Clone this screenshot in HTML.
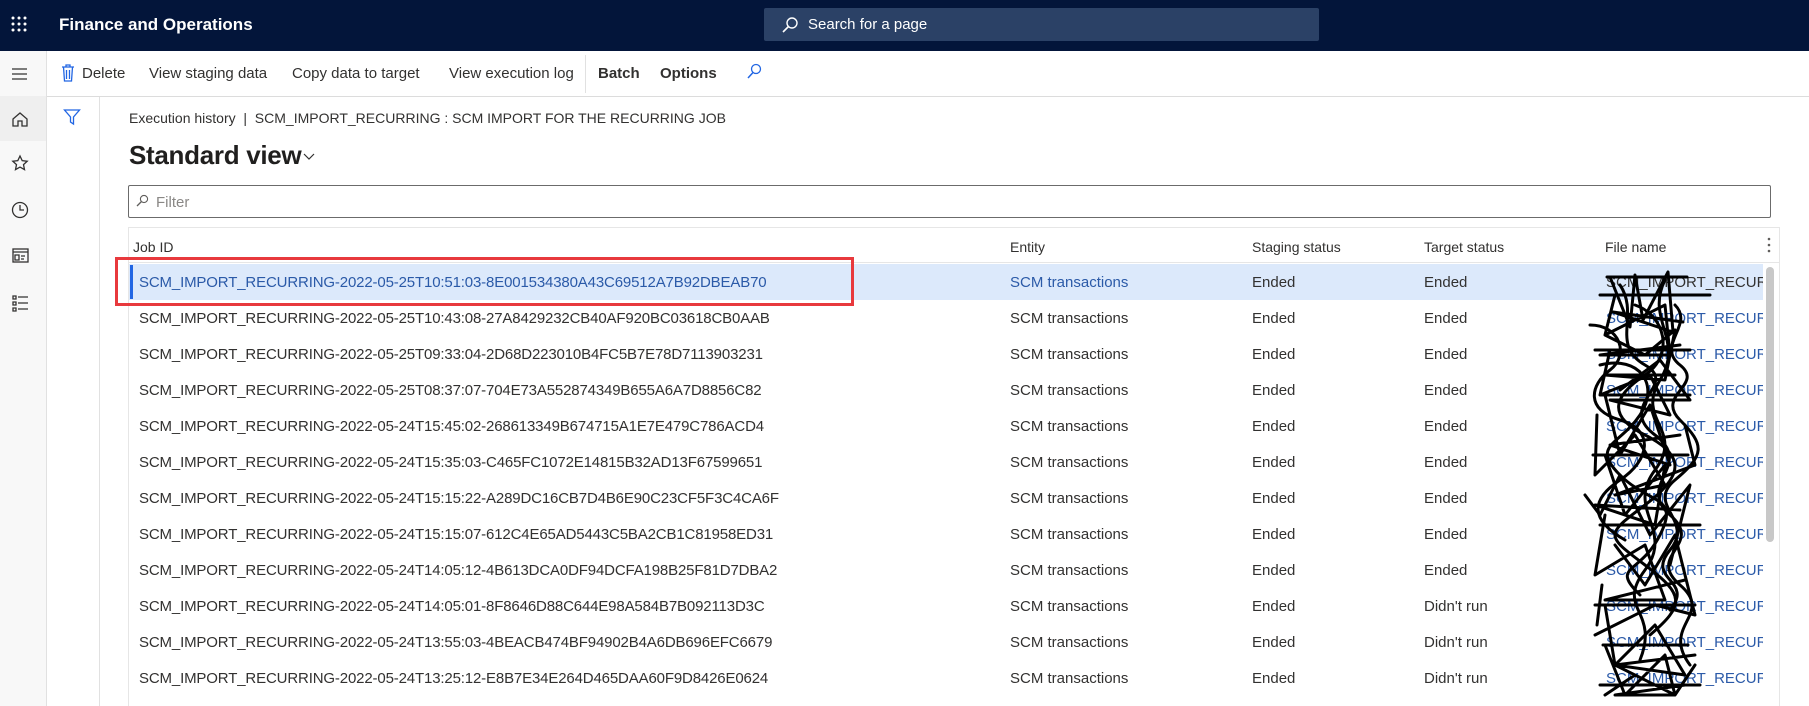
<!DOCTYPE html>
<html><head><meta charset="utf-8"><style>
*{margin:0;padding:0;box-sizing:border-box}
body{width:1809px;height:706px;overflow:hidden;background:#fff;font-family:"Liberation Sans",sans-serif;color:#323130;position:relative}
.abs{position:absolute;white-space:nowrap}
.top{left:0;top:0;width:1809px;height:51px;background:#03153a}
.rail{left:0;top:51px;width:47px;height:655px;background:#f8f8f8;border-right:1px solid #e1e1e1}
.tb{left:47px;top:51px;width:1762px;height:46px;border-bottom:1px solid #dcdcdc;background:#fff}
.tbt{font-size:15px;top:65px;color:#323130}
.row{left:129px;width:1634px;height:36px;font-size:15px;overflow:hidden}
.row span{position:absolute;top:10px}
.row .id{left:10px;letter-spacing:-0.15px}
.row .fn{left:1477px;width:157px;overflow:hidden;color:#2b5aa8}
</style></head><body>
<div class="abs top"></div>
<svg class="abs" style="left:11px;top:16px" width="18" height="18"><g fill="#fff"><circle cx="2" cy="2" r="1.5"/><circle cx="8" cy="2" r="1.5"/><circle cx="14" cy="2" r="1.5"/><circle cx="2" cy="8" r="1.5"/><circle cx="8" cy="8" r="1.5"/><circle cx="14" cy="8" r="1.5"/><circle cx="2" cy="14" r="1.5"/><circle cx="8" cy="14" r="1.5"/><circle cx="14" cy="14" r="1.5"/></g></svg>
<div class="abs" style="left:59px;top:15px;color:#fff;font-size:17px;font-weight:bold">Finance and Operations</div>
<div class="abs" style="left:764px;top:8px;width:555px;height:33px;background:#2b4166;border-radius:2px"></div>
<svg class="abs" style="left:781px;top:16px" width="18" height="18"><circle cx="11" cy="7" r="5" fill="none" stroke="#fff" stroke-width="1.4"/><path d="M7.5 10.5L2 16" stroke="#fff" stroke-width="1.6"/></svg>
<div class="abs" style="left:808px;top:16px;color:#fff;font-size:15px">Search for a page</div>

<div class="abs rail"></div>
<div class="abs" style="left:0;top:96px;width:46px;height:45px;background:#efefef"></div>
<svg class="abs" style="left:0;top:51px" width="47" height="280" fill="none" stroke="#323130" stroke-width="1.3">
<path d="M12 18h15M12 23h15M12 28h15"/>
<path d="M13 68l7-6 7 6v7h-5v-5h-4v5h-5z"/>
<path d="M20 105l2.2 4.6 5 .6-3.7 3.4 1 5-4.5-2.5-4.5 2.5 1-5-3.7-3.4 5-.6z"/>
<circle cx="20" cy="159" r="7.5"/><path d="M20 154v5h4"/>
<rect x="13" y="198" width="15" height="13"/><path d="M13 201h15M15 204h4v5h-4zM21 205h4M21 208h3"/>
<path d="M13 245h3v3h-3zM13 251h3v3h-3zM13 257h3v3h-3zM18 246h10M18 252h10M18 258h10"/>
</svg>

<div class="abs tb"></div>
<svg class="abs" style="left:61px;top:64px" width="14" height="18" fill="none" stroke="#2266e3" stroke-width="1.3"><path d="M1 3h12M5 3V1h4v2M2.5 3l1 14h7l1-14M5.5 6v9M8.5 6v9"/></svg>
<div class="abs tbt" style="left:82px">Delete</div>
<div class="abs tbt" style="left:149px">View staging data</div>
<div class="abs tbt" style="left:292px">Copy data to target</div>
<div class="abs tbt" style="left:449px">View execution log</div>
<div class="abs" style="left:585px;top:55px;width:1px;height:38px;background:#e1e1e1"></div>
<div class="abs tbt" style="left:598px;font-weight:bold">Batch</div>
<div class="abs tbt" style="left:660px;font-weight:bold">Options</div>
<svg class="abs" style="left:746px;top:63px" width="16" height="18"><circle cx="10" cy="6" r="4.5" fill="none" stroke="#2266e3" stroke-width="1.3"/><path d="M7 9.5L2 15" stroke="#2266e3" stroke-width="1.5"/></svg>

<div class="abs" style="left:99px;top:97px;width:1px;height:609px;background:#e1e1e1"></div>
<svg class="abs" style="left:63px;top:108px" width="18" height="18"><path d="M1.5 2h15l-6 7v7l-3-2V9z" fill="none" stroke="#2266e3" stroke-width="1.3"/></svg>

<div class="abs" style="left:129px;top:110px;font-size:14px">Execution history &nbsp;|&nbsp; SCM_IMPORT_RECURRING : SCM IMPORT FOR THE RECURRING JOB</div>
<div class="abs" style="left:129px;top:140px;font-size:26px;font-weight:bold;color:#201f1e;letter-spacing:-0.3px">Standard view</div>
<svg class="abs" style="left:303px;top:151px" width="12" height="10"><path d="M1 3l5 5 5-5" fill="none" stroke="#323130" stroke-width="1.2"/></svg>

<div class="abs" style="left:128px;top:185px;width:1643px;height:33px;border:1px solid #6b6b6b;border-radius:2px"></div>
<svg class="abs" style="left:135px;top:194px" width="14" height="14"><circle cx="9" cy="5" r="3.6" fill="none" stroke="#605e5c" stroke-width="1.1"/><path d="M6.5 7.5L2 12" stroke="#605e5c" stroke-width="1.3"/></svg>
<div class="abs" style="left:156px;top:194px;font-size:15px;color:#8a8886">Filter</div>

<div class="abs" style="left:128px;top:227px;width:1652px;height:479px;border:1px solid #e6e6e6;border-bottom:none"></div>
<div class="abs" style="left:129px;top:262px;width:1650px;height:1px;background:#e6e6e6"></div>
<div class="abs" style="left:133px;top:239px;font-size:14px">Job ID</div>
<div class="abs" style="left:1010px;top:239px;font-size:14px">Entity</div>
<div class="abs" style="left:1252px;top:239px;font-size:14px">Staging status</div>
<div class="abs" style="left:1424px;top:239px;font-size:14px">Target status</div>
<div class="abs" style="left:1605px;top:239px;font-size:14px">File name</div>
<svg class="abs" style="left:1767px;top:237px" width="4" height="18" fill="#605e5c"><circle cx="2" cy="2" r="1.3"/><circle cx="2" cy="8" r="1.3"/><circle cx="2" cy="14" r="1.3"/></svg>

<div class="abs" style="left:129px;top:264px;width:1634px;height:36px;background:#dce9fb"></div>
<div class="abs" style="left:130px;top:265px;width:3px;height:34px;background:#2266e3"></div>

<div class="abs row" style="top:264px;color:#2b5aa8"><span class="id">SCM_IMPORT_RECURRING-2022-05-25T10:51:03-8E001534380A43C69512A7B92DBEAB70</span><span style="left:881px">SCM transactions</span><span style="left:1123px;color:#323130">Ended</span><span style="left:1295px;color:#323130">Ended</span><span class="fn" style="color:#323130">SCM_IMPORT_RECURRING</span></div>
<div class="abs row" style="top:300px"><span class="id">SCM_IMPORT_RECURRING-2022-05-25T10:43:08-27A8429232CB40AF920BC03618CB0AAB</span><span style="left:881px">SCM transactions</span><span style="left:1123px">Ended</span><span style="left:1295px">Ended</span><span class="fn">SCM_IMPORT_RECURRING</span></div>
<div class="abs row" style="top:336px"><span class="id">SCM_IMPORT_RECURRING-2022-05-25T09:33:04-2D68D223010B4FC5B7E78D7113903231</span><span style="left:881px">SCM transactions</span><span style="left:1123px">Ended</span><span style="left:1295px">Ended</span><span class="fn">SCM_IMPORT_RECURRING</span></div>
<div class="abs row" style="top:372px"><span class="id">SCM_IMPORT_RECURRING-2022-05-25T08:37:07-704E73A552874349B655A6A7D8856C82</span><span style="left:881px">SCM transactions</span><span style="left:1123px">Ended</span><span style="left:1295px">Ended</span><span class="fn">SCM_IMPORT_RECURRING</span></div>
<div class="abs row" style="top:408px"><span class="id">SCM_IMPORT_RECURRING-2022-05-24T15:45:02-268613349B674715A1E7E479C786ACD4</span><span style="left:881px">SCM transactions</span><span style="left:1123px">Ended</span><span style="left:1295px">Ended</span><span class="fn">SCM_IMPORT_RECURRING</span></div>
<div class="abs row" style="top:444px"><span class="id">SCM_IMPORT_RECURRING-2022-05-24T15:35:03-C465FC1072E14815B32AD13F67599651</span><span style="left:881px">SCM transactions</span><span style="left:1123px">Ended</span><span style="left:1295px">Ended</span><span class="fn">SCM_IMPORT_RECURRING</span></div>
<div class="abs row" style="top:480px"><span class="id">SCM_IMPORT_RECURRING-2022-05-24T15:15:22-A289DC16CB7D4B6E90C23CF5F3C4CA6F</span><span style="left:881px">SCM transactions</span><span style="left:1123px">Ended</span><span style="left:1295px">Ended</span><span class="fn">SCM_IMPORT_RECURRING</span></div>
<div class="abs row" style="top:516px"><span class="id">SCM_IMPORT_RECURRING-2022-05-24T15:15:07-612C4E65AD5443C5BA2CB1C81958ED31</span><span style="left:881px">SCM transactions</span><span style="left:1123px">Ended</span><span style="left:1295px">Ended</span><span class="fn">SCM_IMPORT_RECURRING</span></div>
<div class="abs row" style="top:552px"><span class="id">SCM_IMPORT_RECURRING-2022-05-24T14:05:12-4B613DCA0DF94DCFA198B25F81D7DBA2</span><span style="left:881px">SCM transactions</span><span style="left:1123px">Ended</span><span style="left:1295px">Ended</span><span class="fn">SCM_IMPORT_RECURRING</span></div>
<div class="abs row" style="top:588px"><span class="id">SCM_IMPORT_RECURRING-2022-05-24T14:05:01-8F8646D88C644E98A584B7B092113D3C</span><span style="left:881px">SCM transactions</span><span style="left:1123px">Ended</span><span style="left:1295px">Didn't run</span><span class="fn">SCM_IMPORT_RECURRING</span></div>
<div class="abs row" style="top:624px"><span class="id">SCM_IMPORT_RECURRING-2022-05-24T13:55:03-4BEACB474BF94902B4A6DB696EFC6679</span><span style="left:881px">SCM transactions</span><span style="left:1123px">Ended</span><span style="left:1295px">Didn't run</span><span class="fn">SCM_IMPORT_RECURRING</span></div>
<div class="abs row" style="top:660px"><span class="id">SCM_IMPORT_RECURRING-2022-05-24T13:25:12-E8B7E34E264D465DAA60F9D8426E0624</span><span style="left:881px">SCM transactions</span><span style="left:1123px">Ended</span><span style="left:1295px">Didn't run</span><span class="fn">SCM_IMPORT_RECURRING</span></div>

<div class="abs" style="left:1763px;top:264px;width:16px;height:442px;background:#fff"></div>
<div class="abs" style="left:1766px;top:267px;width:8px;height:275px;background:#c8c8c8;border-radius:4px"></div>

<div class="abs" style="left:115px;top:257px;width:739px;height:49px;border:3px solid #e8393d"></div>

<svg class="abs" style="left:1575px;top:265px" width="150" height="440" fill="none" stroke="#000" stroke-width="3" stroke-linejoin="round" stroke-linecap="round">
<path d="M32 12h80M35 12l20 50 5-52 8 45 25-48 5 60-60-20 70 10M25 30h110M40 30l-10 40 60-30 5 50-70 0 80-10M30 70l40 20 30-25-10 50-60-5 70 0M20 85h95M35 85l-10 45 50-20 20 40-60-15 80 0-30-40-40 30M25 130h90M30 130l15 60 30-50 20 60-60-20 70-10M22 150l-2 60 40-40 30 50-50 10 80-30-10-40M18 190h95M30 190l20 60 40-50-10 60-60-20 85 5M10 230l15 20 20-40 30 60 40-50-20 80M30 250l-10 60 50-30 20 55-60 0 80-20M25 260h100M40 280l30 40 30-50 20 80-40-10-60 30M20 340h100M30 340l10 60 40-40 30 50-70-10 80-10M22 360l5-40M28 380h85M30 380l20 50 40-40 10 40-60 0 70-10M25 420h100M30 430l30-20 40 20 20-30M40 400l60 30"/>
<path d="M45 20c20 30 -10 60 25 80s-30 40 10 70-20 50 15 80-25 40 10 70 -20 40 10 80M90 15c-20 40 20 60 -5 100s25 50 -5 90 20 60 -10 100 15 40 -5 90M60 40c30 10 40 50 10 70s-40 40 0 60 40 40 0 70-40 30 0 60 40 40 5 70M25 100c40-10 60 20 40 50s-50 30-20 60 60 20 40 60-50 30-20 60"/>
<path d="M100 40c20 20-20 40 5 60s-25 30 0 55 25 35-5 60 20 40-5 70 25 30 0 60M15 60c30 0 40 30 20 45s-25 40 10 50 30 40 0 60-30 40 5 60"/>
</svg>
</body></html>
